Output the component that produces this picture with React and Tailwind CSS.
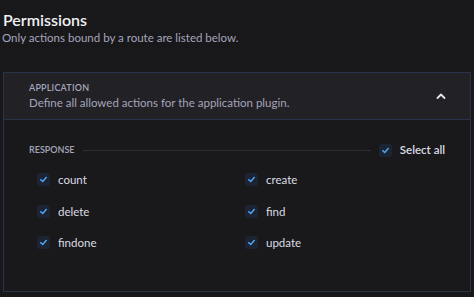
import React from "react";

function Check({ className = "" }) {
  return (
    <span className={"flex h-[13px] w-[13px] items-center justify-center rounded-[3px] bg-[#1c2433] " + className}>
      <svg width="9" height="9" viewBox="0 0 10 10" fill="none">
        <path d="M2 5.2 L4.1 7.2 L8 2.8" stroke="#4ea4f0" strokeWidth="1.7" strokeLinecap="round" strokeLinejoin="round" />
      </svg>
    </span>
  );
}

function Item({ label }) {
  return (
    <div className="flex h-[31.5px] items-center gap-[8px]">
      <Check />
      <span className="text-[11.5px] text-[#dcdce4]">{label}</span>
    </div>
  );
}

export default function App() {
  return (
    <div className="h-[297px] w-[474px] overflow-hidden bg-[#18181b] px-[3px] pt-[10px]" style={{ fontFamily: "Lato, 'Noto Sans', sans-serif" }}>
      <h1 className="text-[16px] font-semibold leading-[20px] text-[#f0f0f3]">Permissions</h1>
      <p className="-ml-[1px] text-[11.5px] leading-[16px] text-[#a5a5ba]">Only actions bound by a route are listed below.</p>
      <div className="mt-[26px] h-[220px] border border-[#26344a] bg-[#19191c]">
        <div className="flex h-[47px] items-center justify-between border-b border-[#26344a] bg-[#212126] pl-[25px] pr-[23px]">
          <div>
            <div className="text-[9px] font-semibold uppercase leading-[14px] tracking-[0.2px] text-[#a5a5ba]">Application</div>
            <div className="text-[11.5px] leading-[16px] text-[#a5a5ba]">Define all allowed actions for the application plugin.</div>
          </div>
          <svg width="12" height="12" viewBox="0 0 12 12" fill="none">
            <path d="M2.5 8 L6 4.5 L9.5 8" stroke="#e6e6ea" strokeWidth="1.8" strokeLinecap="round" strokeLinejoin="round" />
          </svg>
        </div>
        <div className="pl-[25px] pr-[25px] pt-[22px]">
          <div className="flex h-[16px] items-center">
            <span className="text-[9px] font-semibold uppercase text-[#a5a5ba]">Response</span>
            <div className="mx-[8px] h-px flex-1 bg-[#2e2e36]" />
            <div className="flex items-center gap-[8px]">
              <Check />
              <span className="text-[11.5px] font-semibold text-[#dcdce4]">Select all</span>
            </div>
          </div>
          <div className="mt-[6px] grid grid-cols-[208px_1fr] pl-[8px]">
            <Item label="count" />
            <Item label="create" />
            <Item label="delete" />
            <Item label="find" />
            <Item label="findone" />
            <Item label="update" />
          </div>
        </div>
      </div>
    </div>
  );
}
